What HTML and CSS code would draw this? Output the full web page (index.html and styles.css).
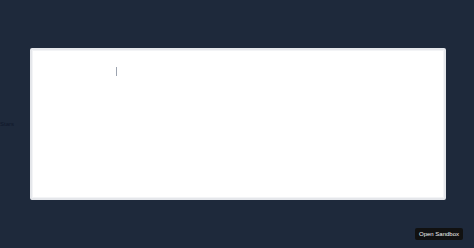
FILE: index.html
```html
<!DOCTYPE html>
<html lang="en">
<head>
    <meta charset="UTF-8">
    <meta name="viewport" content="width=device-width, initial-scale=1.0">
    <title>Stars</title>
    <link rel="stylesheet" href="styles.css">
</head>
<body>
    <div class="stage">
        <span class="label">Stars</span>
        <div class="card">
            <span class="caret"></span>
        </div>
    </div>
    <button class="sandbox">Open Sandbox</button>
</body>
</html>
```

FILE: styles.css
```css
html, body {
    margin: 0;
    padding: 0;
    height: 100%;
}
body {
    font-family: "Liberation Sans", Arial, sans-serif;
    background-color: #1e293b;
}
.stage {
    height: 248px;
    display: flex;
    align-items: center;
}
.label {
    width: 30px;
    flex-shrink: 0;
    white-space: nowrap;
    font-size: 6px;
    color: #0f172a;
}
.card {
    width: 328px;
    height: 131px;
    background-color: #fff;
    border: 2px solid #e5e7eb;
    border-radius: 2px;
    box-shadow: inset 0 0 0 1px #f3f4f6;
    padding: 17px 0 0 84px;
}
.caret {
    display: block;
    width: 1px;
    height: 9px;
    background-color: #9ca3af;
}
.sandbox {
    position: fixed;
    right: 11px;
    bottom: 8px;
    background-color: #111;
    color: #f3f4f6;
    border: none;
    border-radius: 2px;
    font-family: "Liberation Sans", Arial, sans-serif;
    font-size: 6px;
    padding: 3px 4px;
}
```
